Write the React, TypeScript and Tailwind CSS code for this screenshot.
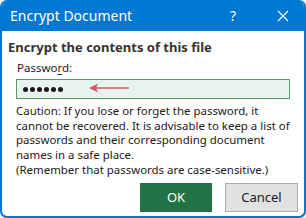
import React from "react";

export default function App() {
  const font = { fontFamily: '"Noto Sans", "Open Sans", sans-serif' };
  return (
    <div className="w-[306px] h-[218px] bg-[#f3f3f3]" style={font}>
      <div className="w-[306px] h-[218px] rounded-[7px] border-2 border-t-0 border-[#0078d4] bg-white overflow-hidden flex flex-col">
        <div className="h-[31px] bg-[#0078d4] flex items-center text-white text-[14px] -mx-[2px] px-[10px]">
          <span className="flex-1 leading-none">Encrypt Document</span>
          <span className="w-[12px] text-center mr-[38px] text-[14px] leading-none">?</span>
          <svg width="12" height="12" viewBox="0 0 12 12" className="mr-[7px]">
            <path d="M1 1 L11 11 M11 1 L1 11" stroke="white" strokeWidth="1.1" fill="none" />
          </svg>
        </div>
        <div className="flex flex-col pt-[8px]">
          <div className="pl-[6px] text-[13px] font-bold leading-[16px] text-[#333333]">
            Encrypt the contents of this file
          </div>
          <div className="pl-[15px] mt-[5px] text-[11.5px] leading-[16px] text-[#1a1a1a]">
            Passwo<span className="underline underline-offset-2">r</span>d:
          </div>
          <div className="ml-[14px] mt-[3px] w-[274px] h-[20px] border border-[#5a9a70] bg-[#e9f3ed] relative flex items-center pl-[6px] gap-[2px]">
            {[0, 1, 2, 3, 4, 5].map((i) => (
              <span key={i} className="w-[5px] h-[5px] rounded-full bg-[#1a1a1a]" />
            ))}
            <svg
              width="42"
              height="12"
              viewBox="0 0 42 12"
              className="absolute left-[71px] top-[2px]"
            >
              <path d="M2 6 H41" stroke="#e0566c" strokeWidth="1.6" />
              <path d="M1 6 L10 1.5 L8 6 L10 10.5 Z" fill="#e0566c" />
            </svg>
          </div>
          <div className="pl-[14px] mt-[5px] text-[11.45px] leading-[14.65px] text-[#1a1a1a]">
            Caution: If you lose or forget the password, it
            <br />
            cannot be recovered. It is advisable to keep a list of
            <br />
            passwords and their corresponding document
            <br />
            names in a safe place.
            <br />
            (Remember that passwords are case-sensitive.)
          </div>
          <div className="flex justify-end gap-[13px] mt-[6px] pr-[6px]">
            <button className="w-[72px] h-[29px] bg-[#217346] text-white text-[13px] leading-none">
              OK
            </button>
            <button className="w-[73px] h-[29px] bg-[#e1e1e1] border border-[#adadad] text-[#1a1a1a] text-[13px] leading-none">
              Cancel
            </button>
          </div>
        </div>
      </div>
    </div>
  );
}
